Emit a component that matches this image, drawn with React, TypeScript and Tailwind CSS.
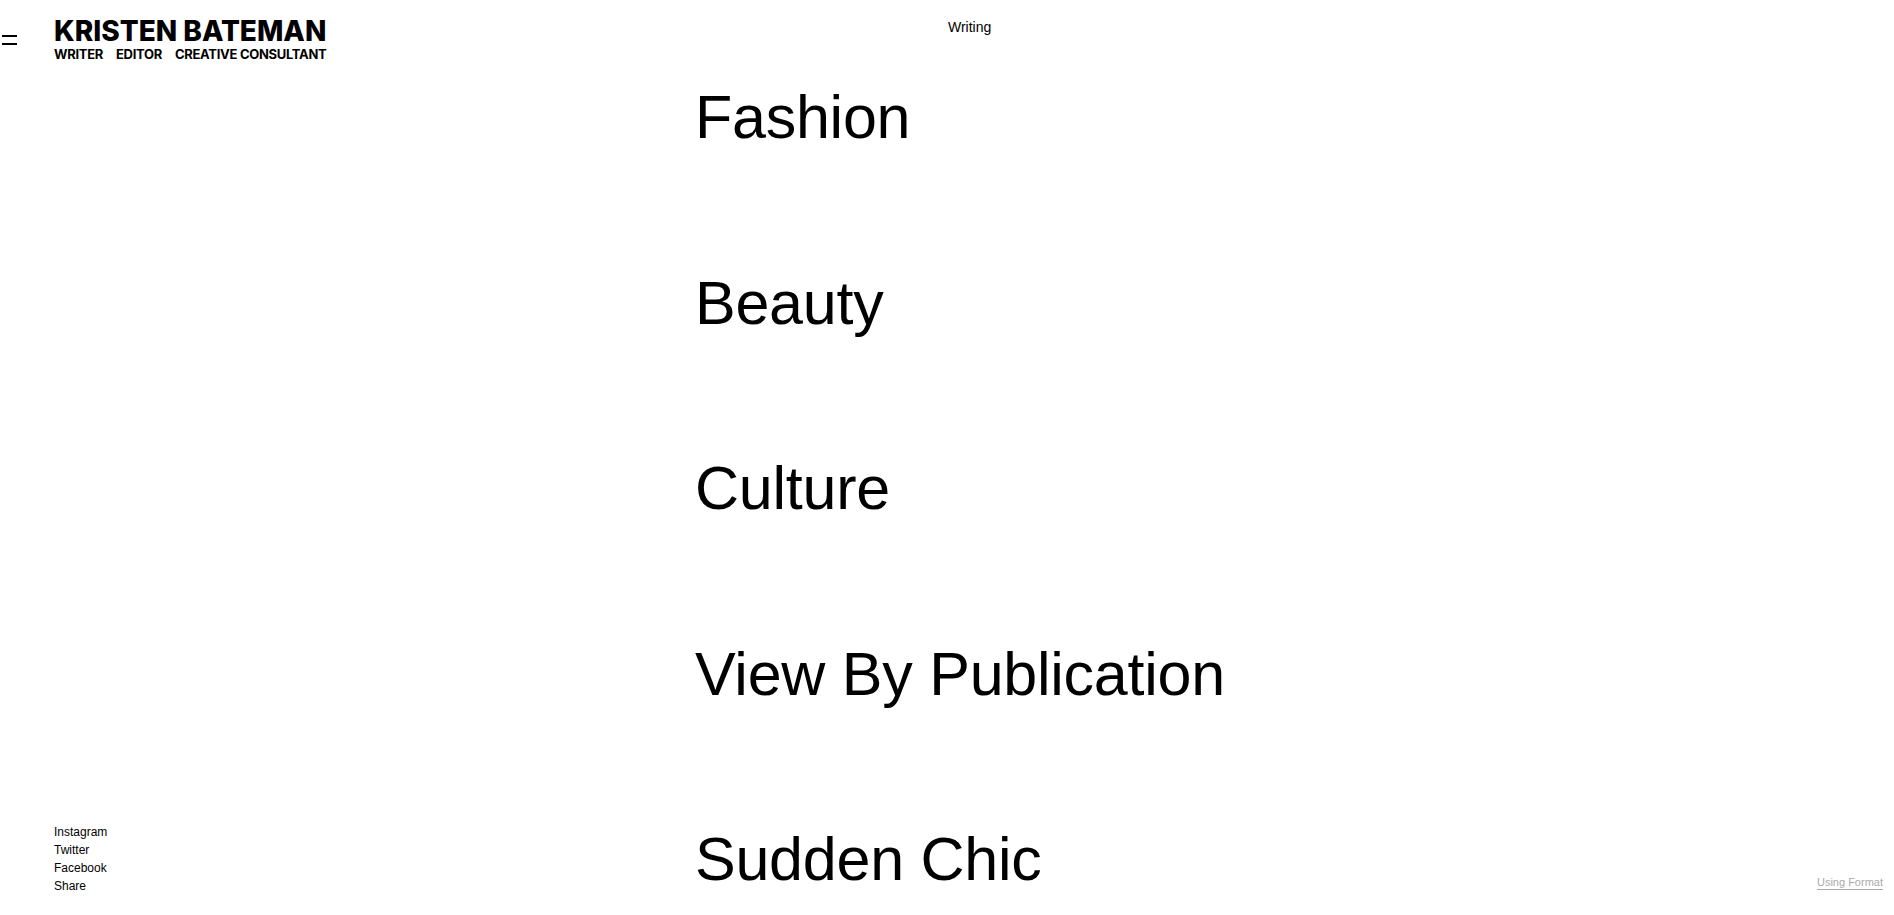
import React from 'react';

const sections = ['Fashion', 'Beauty', 'Culture', 'View By Publication', 'Sudden Chic'];
const socials = ['Instagram', 'Twitter', 'Facebook', 'Share'];

function MenuIcon() {
  return (
    <button type="button" className="flex flex-col gap-[6px] pt-[35px] pl-[2px]" aria-label="Menu">
      <span className="block h-[2px] w-[15px] bg-black" />
      <span className="block h-[2px] w-[15px] bg-black" />
    </button>
  );
}

export default function App() {
  return (
    <div className="flex h-[915px] overflow-hidden bg-white text-black">
      {/* left rail */}
      <aside className="flex w-[695px] shrink-0 flex-col justify-between">
        <div className="flex">
          <MenuIcon />
          <div className="pl-[37px] pt-[17px]" style={{ fontFamily: 'Inter, sans-serif' }}>
            <h1 className="text-[28px] font-extrabold leading-[28px] whitespace-nowrap">KRISTEN BATEMAN</h1>
            <div className="mt-[3px] flex gap-[13px] text-[13px] font-bold leading-[13px] whitespace-nowrap tracking-[-0.3px]">
              <span>WRITER</span>
              <span>EDITOR</span>
              <span>CREATIVE CONSULTANT</span>
            </div>
          </div>
        </div>
        <ul
          className="pb-[20px] pl-[54px] text-[12px] leading-[18px]"
          style={{ fontFamily: '"Liberation Sans", Arial, sans-serif' }}
        >
          {socials.map((s) => (
            <li key={s}>
              <a href="#">{s}</a>
            </li>
          ))}
        </ul>
      </aside>

      {/* main list */}
      <main className="flex-1" style={{ fontFamily: '"Liberation Sans", Arial, sans-serif' }}>
        <div className="pl-[253px] pt-[17px] text-[14px] leading-[20px]">Writing</div>
        <div className="mt-[50px] flex flex-col gap-[124.5px]">
          {sections.map((s) => (
            <a key={s} href="#" className="block text-[61px] leading-[61px] tracking-[-0.25px] whitespace-nowrap">
              {s}
            </a>
          ))}
        </div>
      </main>

      {/* right footer */}
      <div className="flex shrink-0 flex-col justify-end pb-[25px] pr-[11px]">
        <a
          href="#"
          className="text-[11px] leading-[16px] text-[#aaaaaa] underline underline-offset-[3px] whitespace-nowrap"
          style={{ fontFamily: '"Liberation Sans", Arial, sans-serif' }}
        >
          Using Format
        </a>
      </div>
    </div>
  );
}
